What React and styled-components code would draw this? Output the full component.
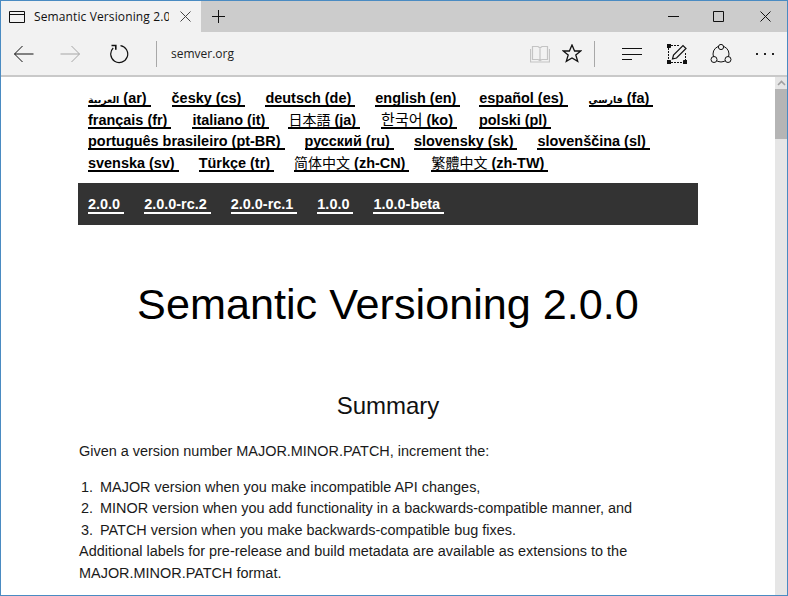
import React from 'react';
import styled, { createGlobalStyle } from 'styled-components';

const GlobalStyle = createGlobalStyle`
  html, body { margin: 0; padding: 0; background: #fff; overflow: hidden; }
  * { box-sizing: border-box; }
`;

const Win = styled.div`
  width: 788px;
  height: 596px;
  display: flex;
  flex-direction: column;
  border: 1px solid #4a8bc2;
  overflow: hidden;
  font-family: "Liberation Sans", Arial, sans-serif;
`;

const TitleBar = styled.div`
  height: 31px;
  flex: none;
  display: flex;
  background: #cccccc;
`;

const Tab = styled.div`
  width: 200px;
  display: flex;
  align-items: center;
  background: #f2f2f2;
  padding-left: 8px;
`;

const TabTitle = styled.span`
  width: 135px;
  margin-left: 9px;
  overflow: hidden;
  white-space: nowrap;
  font-family: "Open Sans", sans-serif;
  font-size: 12px;
  letter-spacing: 0.12px;
  color: #111;
`;

const Plain = styled.button`
  padding: 0;
  border: 0;
  background: none;
  display: flex;
  align-items: center;
  justify-content: center;
  width: ${({ w }) => w || 20}px;
  margin-left: ${({ ml }) => ml || 0}px;
`;

const Spacer = styled.div`
  flex: ${({ w }) => (w ? `0 0 ${w}px` : 1)};
`;

const Toolbar = styled.div`
  height: 45px;
  flex: none;
  display: flex;
  align-items: center;
  background: #f2f2f2;
  border-bottom: 2px solid #c9c9c9;
  padding-left: 12px;
`;

const Sep = styled.div`
  width: 1px;
  height: 26px;
  background: #a8a8a8;
  margin-left: ${({ ml }) => ml}px;
`;

const Url = styled.span`
  margin-left: 14px;
  font-family: "Open Sans", sans-serif;
  font-size: 12px;
  color: #222;
`;

const Body = styled.div`
  flex: 1;
  min-height: 0;
  display: flex;
`;

const Page = styled.div`
  flex: 1;
  min-width: 0;
  overflow: hidden;
  padding-left: 77px;
`;

const Container = styled.div`
  width: 620px;
  font-size: 14.45px;
  line-height: 21.5px;
  color: #1a1a1a;
`;

const Langs = styled.div`
  padding: 11px 10px 9px;
`;

const LangRow = styled.div`
  display: flex;
  height: 21.5px;
`;

const Link = styled.a`
  display: block;
  height: 19px;
  margin-right: ${({ gap }) => gap ?? 22}px;
  padding-right: 4px;
  font-weight: 700;
  line-height: ${({ light }) => (light ? 19 : 21)}px;
  white-space: nowrap;
  color: ${({ light }) => (light ? '#fff' : '#000')};
  border-bottom: 2px solid ${({ light }) => (light ? '#fff' : '#000')};
`;

const Script = styled.span`
  font-weight: ${({ bold }) => (bold ? 700 : 400)};
  font-family: ${({ face }) => face}, sans-serif;
  font-size: ${({ size }) => size}px;
  line-height: 1;
`;

const Versions = styled.div`
  height: 42px;
  background: #333333;
  display: flex;
  align-items: center;
  padding: 0 10px;
`;

const Title = styled.h1`
  margin: 50px 0 0;
  height: 59px;
  font-size: 43.2px;
  line-height: 59px;
  font-weight: 400;
  text-align: center;
  color: #000;
`;

const Heading = styled.h2`
  margin: 55px 0 0;
  height: 34px;
  font-size: 24px;
  line-height: 34px;
  font-weight: 400;
  text-align: center;
  color: #111;
`;

const Para = styled.p`
  margin: ${({ top }) => top || 0}px 0 0;
  padding-left: 1px;
`;

const Steps = styled.ol`
  margin: 14px 0 0;
  padding: 0 0 0 3px;
  list-style: none;
  counter-reset: step;
`;

const Step = styled.li`
  counter-increment: step;

  &::before {
    content: counter(step) ".";
    display: inline-block;
    width: 19px;
  }
`;

const ScrollBar = styled.div`
  width: 12px;
  flex: none;
  display: flex;
  flex-direction: column;
  background: #e6e6e6;
`;

const ScrollUp = styled.div`
  height: 12px;
  display: flex;
  align-items: center;
  justify-content: center;
`;

const Thumb = styled.div`
  height: 50px;
  background: #b5b5b5;
`;

const stroke = { fill: 'none', stroke: '#111', strokeWidth: 1 };

const ar = <Script bold face='"DejaVu Sans"' size={9.5}>العربية</Script>;
const fa = <Script bold face='"DejaVu Sans"' size={9.5}>فارسي</Script>;
const ja = <Script face='"Noto Sans CJK JP"' size={14}>日本語</Script>;
const ko = <Script face='"Noto Sans CJK KR"' size={15}>한국어</Script>;
const sc = <Script face='"Noto Sans CJK SC"' size={14}>简体中文</Script>;
const tc = <Script face='"Noto Sans CJK TC"' size={14}>繁體中文</Script>;

const langs = [
  [[ar, ' (ar)', 21], ['česky (cs)', '', 20], ['deutsch (de)', '', 20], ['english (en)', '', 19], ['español (es)', '', 21], [fa, ' (fa)', 0]],
  [['français (fr)', '', 21], ['italiano (it)', '', 19], [ja, ' (ja)', 21], [ko, ' (ko)', 22], ['polski (pl)', '', 0]],
  [['português brasileiro (pt-BR)', '', 20], ['русский (ru)', '', 20], ['slovensky (sk)', '', 20], ['slovenščina (sl)', '', 0]],
  [['svenska (sv)', '', 20], ['Türkçe (tr)', '', 20], [sc, ' (zh-CN)', 22], [tc, ' (zh-TW)', 0]],
];

const versions = ['2.0.0', '2.0.0-rc.2', '2.0.0-rc.1', '1.0.0', '1.0.0-beta'];

export default function App() {
  return (
    <Win>
      <GlobalStyle />
      <TitleBar>
        <Tab>
          <svg width="16" height="14" {...stroke}>
            <path d="M.5 1.5h15v11H.5zM.5 4.5h15" />
          </svg>
          <TabTitle>Semantic Versioning 2.0.0</TabTitle>
          <Plain w={12} ml={10}>
            <svg width="11" height="11" fill="none" stroke="#444"><path d="M.5.5l10 10M10.5.5l-10 10" /></svg>
          </Plain>
        </Tab>
        <Plain w={14} ml={10}>
          <svg width="13" height="13" {...stroke}><path d="M6.5 0v13M0 6.5h13" /></svg>
        </Plain>
        <Spacer />
        <Plain w={12}>
          <svg width="11" height="11" {...stroke}><path d="M0 5.5h11" /></svg>
        </Plain>
        <Plain w={11} ml={34}>
          <svg width="11" height="11" {...stroke}><path d="M.5.5h10v10H.5z" /></svg>
        </Plain>
        <Plain w={11} ml={36}>
          <svg width="11" height="11" {...stroke}><path d="M.5.5l10 10M10.5.5l-10 10" /></svg>
        </Plain>
        <Spacer w={16} />
      </TitleBar>
      <Toolbar>
        <svg width="21" height="18" {...stroke}><path d="M9.5 1L1.5 9l8 8M1.5 9H20.5" /></svg>
        <Plain w={21} ml={26}>
          <svg width="21" height="18" fill="none" stroke="#a6a6a6"><path d="M11.5 1l8 8-8 8M19.5 9H.5" /></svg>
        </Plain>
        <Plain w={20} ml={28}>
          <svg width="20" height="20" fill="none" stroke="#111" strokeWidth="1.2">
            <path d="M11.5 1.6A8.5 8.5 0 1 1 4.2 4" />
            <path d="M2.5 1.5H6.8V5.8" strokeWidth="1.6" />
          </svg>
        </Plain>
        <Sep ml={27} />
        <Url>semver.org</Url>
        <Spacer />
        <svg width="20" height="18" fill="none" stroke="#c4c4c4" strokeWidth="1.2"><path d="M2.5 1.5h5.5l2 1.5 2-1.5h5.5v13h-5.5l-2 1-2-1h-5.5zM10 3v12M.5 4v13h19V4" /></svg>
        <Plain w={20} ml={12}>
          <svg width="20" height="19" {...stroke} strokeWidth="1.3"><path d="M10 1l2.6 6h6.2l-5 4 1.9 6.4L10 14l-5.7 3.4L6.2 11l-5-4h6.2z" /></svg>
        </Plain>
        <Sep ml={12} />
        <Plain w={20} ml={27}>
          <svg width="20" height="14" {...stroke}><path d="M0 1.5h20M0 7.5h20M0 12.5h10" /></svg>
        </Plain>
        <Plain w={20} ml={25}>
          <svg width="20" height="20" fill="none" stroke="#111">
            <path d="M4 1.5h8M1.5 4v12M4 18.5h12M18.5 9v7" strokeDasharray="2 1" />
            <path d="M0 0h3.5v3.5H0zM0 16.5h3.5V20H0zM16.5 16.5H20V20h-3.5z" fill="#111" />
            <path d="M5.5 15l1-4L16 1.5l3 3L9.5 14z" strokeWidth="1.2" />
          </svg>
        </Plain>
        <Plain w={22} ml={23}>
          <svg width="22" height="20" {...stroke}>
            <circle cx="11" cy="10" r="8" />
            <circle cx="11" cy="3" r="2.6" fill="#f2f2f2" />
            <circle cx="4" cy="15.5" r="3" fill="#f2f2f2" />
            <circle cx="18" cy="15.5" r="3" fill="#f2f2f2" />
          </svg>
        </Plain>
        <Plain w={20} ml={23}>
          <svg width="20" height="4" fill="#222"><path d="M1 1h2v2H1zM9 1h2v2H9zM17 1h2v2h-2z" /></svg>
        </Plain>
        <Spacer w={12} />
      </Toolbar>
      <Body>
        <Page>
          <Container>
            <Langs>
              {langs.map((row, i) => (
                <LangRow key={i}>
                  {row.map(([label, tail, gap], j) => (
                    <Link key={j} gap={gap}>{label}{tail}</Link>
                  ))}
                </LangRow>
              ))}
            </Langs>
            <Versions>
              {versions.map((v) => (
                <Link key={v} light gap={20}>{v}</Link>
              ))}
            </Versions>
            <Title>Semantic Versioning 2.0.0</Title>
            <Heading>Summary</Heading>
            <Para top={18}>Given a version number MAJOR.MINOR.PATCH, increment the:</Para>
            <Steps>
              <Step>MAJOR version when you make incompatible API changes,</Step>
              <Step>MINOR version when you add functionality in a backwards-compatible manner, and</Step>
              <Step>PATCH version when you make backwards-compatible bug fixes.</Step>
            </Steps>
            <Para>Additional labels for pre-release and build metadata are available as extensions to the MAJOR.MINOR.PATCH format.</Para>
          </Container>
        </Page>
        <ScrollBar>
          <ScrollUp>
            <svg width="9" height="6" fill="none" stroke="#a0a0a0" strokeWidth="1.6"><path d="M1 5l3.5-3.5L8 5" /></svg>
          </ScrollUp>
          <Thumb />
        </ScrollBar>
      </Body>
    </Win>
  );
}
